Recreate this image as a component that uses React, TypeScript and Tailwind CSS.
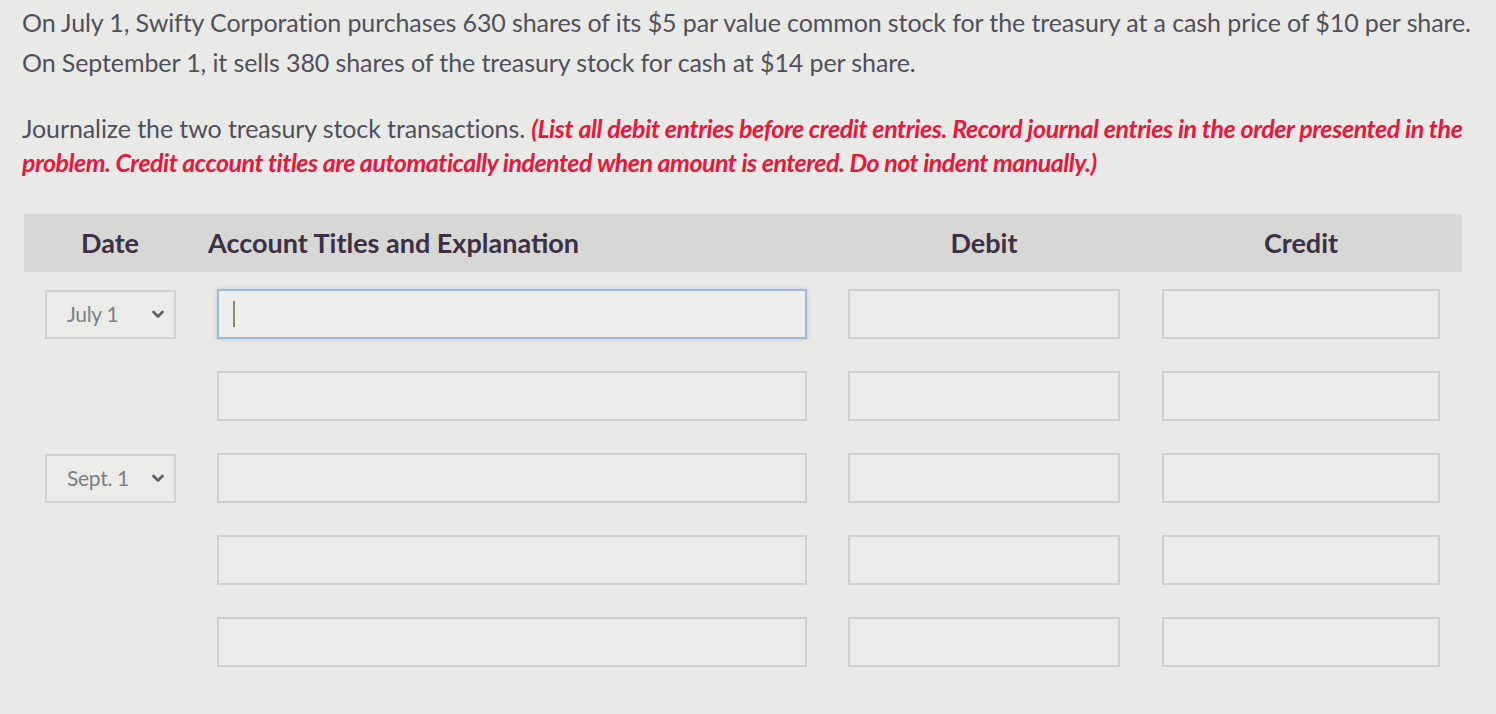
import React from "react";

const font = { fontFamily: "Lato, 'Open Sans', sans-serif" };

function Chevron() {
  return (
    <svg width="12" height="9" viewBox="0 0 12 9" className="shrink-0">
      <path d="M1.5 2 L6 6.5 L10.5 2" fill="none" stroke="#5e5e66" strokeWidth="2.6" strokeLinecap="round" strokeLinejoin="round" />
    </svg>
  );
}

function DateSelect({ label }: { label: string }) {
  return (
    <div className="ml-[21px] flex h-[49px] w-[131px] items-center justify-between border-2 border-[#d2d2d0] bg-[#ebebe9] pl-[20px] pr-[10px] text-[21px] tracking-[-0.3px] text-[#7e7e86]">
      <span>{label}</span>
      <Chevron />
    </div>
  );
}

function Box({ className, focused }: { className: string; focused?: boolean }) {
  return (
    <div
      className={
        "flex h-[50px] items-center " +
        className +
        (focused
          ? " border-2 border-[#9dbbd9] bg-[#ededec] shadow-[0_0_4px_rgba(120,160,210,0.5)]"
          : " border-2 border-[#cfcfcd] bg-[#ebebea]")
      }
    >
      {focused && <div className="ml-[14px] h-[26px] w-[2px] bg-[#8a8a70]" />}
    </div>
  );
}

export default function App() {
  const rows = [
    { date: "July 1", focused: true },
    { date: "" },
    { date: "Sept. 1" },
    { date: "" },
    { date: "" },
  ];
  return (
    <div className="h-[714px] w-[1496px] overflow-hidden bg-[#e9e9e7]" style={font}>
      <div className="whitespace-nowrap pl-[22px] pt-[2px] text-[25px] leading-[40px] tracking-[-0.1px] text-[#50505a]">
        On July 1, Swifty Corporation purchases 630 shares of its $5 par value common stock for the treasury at a cash price of $10 per share.
        <br />
        On September 1, it sells 380 shares of the treasury stock for cash at $14 per share.
      </div>
      <div className="mt-[29px] whitespace-nowrap pl-[22px] text-[25px] leading-[34px] tracking-[-0.1px] text-[#50505a]">
        Journalize the two treasury stock transactions.{" "}
        <span className="text-[25px] font-bold italic tracking-[-0.4px] text-[#e8173c]">
          (List all debit entries before credit entries. Record journal entries in the order presented in the
          <br />
          <span className="tracking-[-0.5px]">problem. Credit account titles are automatically indented when amount is entered. Do not indent manually.)</span>
        </span>
      </div>
      <div className="ml-[24px] mt-[35px] w-[1438px]">
        <div className="grid h-[58px] grid-cols-[172px_632px_312px_322px] items-center bg-[#d7d7d5] text-[27px] font-bold text-[#3d2f45]">
          <div className="text-center">Date</div>
          <div className="pl-[12px]">Account Titles and Explanation</div>
          <div className="text-center">Debit</div>
          <div className="text-center">Credit</div>
        </div>
        <div className="mt-[17px] flex flex-col gap-[32px]">
          {rows.map((r, i) => (
            <div key={i} className="grid grid-cols-[172px_632px_312px_322px] items-center">
              <div>{r.date ? <DateSelect label={r.date} /> : null}</div>
              <div>
                <Box className="ml-[21px] w-[590px]" focused={r.focused} />
              </div>
              <div>
                <Box className="ml-[20px] w-[272px]" />
              </div>
              <div>
                <Box className="ml-[22px] w-[278px]" />
              </div>
            </div>
          ))}
        </div>
      </div>
    </div>
  );
}
